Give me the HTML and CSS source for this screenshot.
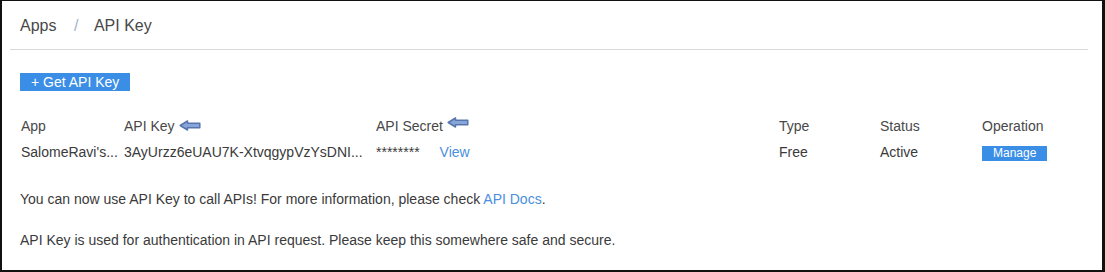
FILE: index.html
```html
<!DOCTYPE html>
<html>
<head>
<meta charset="utf-8">
<link rel="stylesheet" href="styles.css">
</head>
<body>
<div class="frame">
  <div class="crumbs">
    <span class="crumb">Apps</span>
    <span class="sep">/</span>
    <span class="crumb">API Key</span>
  </div>
  <div class="content">
    <button class="btn-get">+ Get API Key</button>
    <div class="table">
      <div class="cell head">App</div>
      <div class="cell head">API Key <svg class="arrow" width="22" height="11" viewBox="0 0 22 11"><path d="M1.2 5.5 L8.5 1 L8.5 3.2 L20.8 3.2 L20.8 7.8 L8.5 7.8 L8.5 10 Z" fill="#86a5d8" stroke="#5876ad" stroke-width="1.5" stroke-linejoin="round"/></svg></div>
      <div class="cell head">API Secret <svg class="arrow up" width="22" height="11" viewBox="0 0 22 11"><path d="M1.2 5.5 L8.5 1 L8.5 3.2 L20.8 3.2 L20.8 7.8 L8.5 7.8 L8.5 10 Z" fill="#86a5d8" stroke="#5876ad" stroke-width="1.5" stroke-linejoin="round"/></svg></div>
      <div class="cell head">Type</div>
      <div class="cell head">Status</div>
      <div class="cell head">Operation</div>

      <div class="cell">SalomeRavi's...</div>
      <div class="cell">3AyUrzz6eUAU7K-XtvqgypVzYsDNI...</div>
      <div class="cell"><span class="stars">********</span><a class="link view">View</a></div>
      <div class="cell">Free</div>
      <div class="cell">Active</div>
      <div class="cell"><span class="btn-manage">Manage</span></div>
    </div>
    <p class="note">You can now use API Key to call APIs! For more information, please check <a class="link">API Docs</a>.</p>
    <p class="note">API Key is used for authentication in API request. Please keep this somewhere safe and secure.</p>
  </div>
</div>
</body>
</html>
```
FILE: styles.css
```css
html, body {
  margin: 0;
  padding: 0;
  background: #fff;
}
.frame {
  box-sizing: border-box;
  width: 1105px;
  height: 272px;
  border-left: 2px solid #111;
  border-top: 1px solid #111;
  border-right: 3px solid #111;
  border-bottom: 2px solid #111;
  font-family: "Liberation Sans", Arial, sans-serif;
  color: #3a3a3a;
  overflow: hidden;
}
.crumbs {
  margin: 0 14px 0 8px;
  padding: 15px 0 13px 10px;
  border-bottom: 1px solid #d9d9d9;
  font-size: 16px;
  line-height: 20px;
  color: #484848;
}
.sep {
  color: #9fb4cc;
  margin: 0 12px 0 13px;
}
.content {
  padding: 23px 0 0 18px;
}
.btn-get {
  display: block;
  border: 0;
  margin: 0;
  padding: 0 11px;
  height: 18px;
  background: #3a8ee6;
  color: #fff;
  font-family: "Liberation Sans", Arial, sans-serif;
  font-size: 14px;
  line-height: 18px;
  cursor: pointer;
}
.table {
  display: grid;
  grid-template-columns: 103px 252px 403px 101px 102px 1fr;
  margin: 25px 0 0 1px;
  font-size: 14px;
  line-height: 20px;
}
.cell {
  padding: 0;
  height: 26px;
  display: flex;
  align-items: flex-start;
  white-space: nowrap;
  color: #3a3a3a;
}
.head {
  color: #484848;
}
.arrow {
  margin: 4px 0 0 4px;
}
.arrow.up {
  margin-top: 1px;
}
.stars {
  font-size: 14px;
}
.link {
  color: #4a8fdd;
  text-decoration: none;
}
.view {
  margin-left: 20px;
}
.btn-manage {
  display: inline-block;
  margin-top: 4px;
  height: 15px;
  line-height: 15px;
  padding: 0 11px;
  background: #3a8ee6;
  color: #fff;
  font-size: 12px;
}
.note {
  margin: 21px 0 0 0;
  font-size: 14px;
  line-height: 20px;
  color: #3a3a3a;
}
```
